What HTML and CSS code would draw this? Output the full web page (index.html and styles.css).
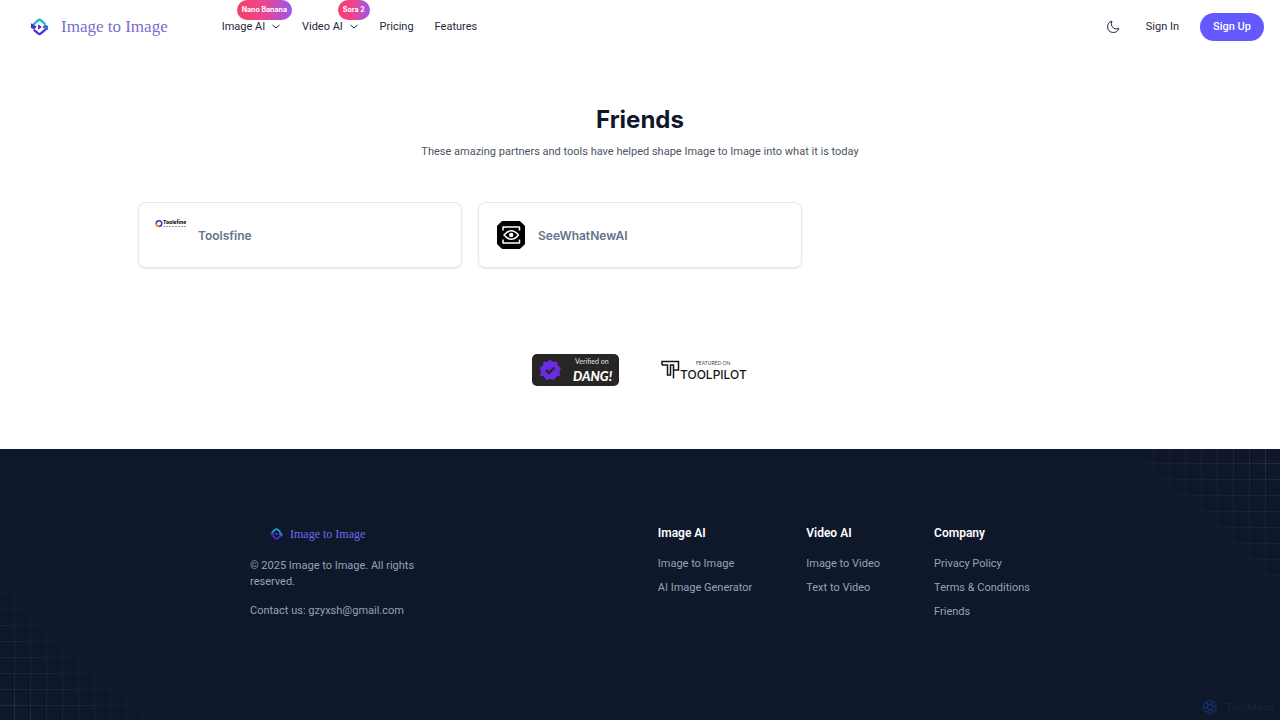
FILE: index.html
```html
<!DOCTYPE html>
<html lang="en">
<head>
<meta charset="utf-8">
<meta name="viewport" content="width=device-width, initial-scale=1">
<title>Friends - Image to Image</title>
<link rel="stylesheet" href="styles.css">
</head>
<body class="page">
<svg class="defs" aria-hidden="true">
  <defs>
    <linearGradient id="brand" x1="1" y1="0" x2="0" y2="1">
      <stop offset="0.1" stop-color="#12c8dc"/>
      <stop offset="0.5" stop-color="#3478d8"/>
      <stop offset="0.75" stop-color="#5a22cc"/>
    </linearGradient>
    <symbol id="logo" viewBox="0 0 20 18">
      <path d="M3 7 8.500 2Q10 .800 11.500 2L16 6" fill="none" stroke="#20b4dc" stroke-width="2.400"/>
      <path d="M17 11 11.500 15.800Q10 17 8.500 15.800L4 12" fill="none" stroke="#5a2bd2" stroke-width="2.400"/>
      <path d="M1 5 7 8.500 4.500 11.500 1 10Z" fill="#4a35c8"/>
      <path d="M19 12.500 13 9.500 15.500 6 19 8Z" fill="#3273d8"/>
      <path d="M8.500 6 12.500 9 8.500 12Z" fill="#4437c9"/>
    </symbol>
  </defs>
</svg>
<header class="topbar">
  <a class="brand" href="#"><svg class="brand-icon"><use href="#logo"/></svg><span>Image to Image</span></a>
  <nav class="menu">
    <button class="menu-item" type="button">Image AI
      <svg class="chevron" viewBox="0 0 8 5"><path d="M.500 1 4 4 7.500 1"/></svg>
      <span class="badge">Nano Banana</span></button>
    <button class="menu-item" type="button">Video AI
      <svg class="chevron" viewBox="0 0 8 5"><path d="M.500 1 4 4 7.500 1"/></svg>
      <span class="badge">Sora 2</span></button>
    <a class="menu-item" href="#">Pricing</a>
    <a class="menu-item" href="#">Features</a>
  </nav>
  <div class="account">
    <button class="theme" type="button" aria-label="Dark mode">
      <svg viewBox="0 0 14 14"><path d="M6 1.200A5.700 5.700 0 1 0 12.800 8.200 4.500 4.500 0 0 1 6.200 6.500 4.500 4.500 0 0 1 6 1.200Z"/></svg>
    </button>
    <a class="signin" href="#">Sign In</a>
    <a class="signup" href="#">Sign Up</a>
  </div>
</header>
<main class="main">
  <h1 class="title">Friends</h1>
  <p class="subtitle">These amazing partners and tools have helped shape Image to Image into what it is today</p>
  <div class="cards">
    <a class="card" href="#">
      <svg class="card-icon" viewBox="0 0 32 32">
        <circle cx="4" cy="4.500" r="2.800" fill="none" stroke="#3c32b4" stroke-width="1.500"/>
        <path d="M1.200 4.500A2.800 2.800 0 0 0 4 7.300" fill="none" stroke="#f39a38" stroke-width="1.800"/>
        <text class="tf-name" x="8" y="5">Toolsfine</text>
        <path d="M8 7.500H31" stroke="#999" stroke-width="1" stroke-dasharray="2 1"/>
      </svg>
      <span>Toolsfine</span>
    </a>
    <a class="card" href="#">
      <svg class="card-icon" viewBox="0 0 32 32">
        <path d="M7 2.500H25L29.500 7V25L25 29.500H7L2.500 25V7Z" stroke="#000" stroke-width="1" stroke-linejoin="round"/>
        <g fill="none" stroke="#fff" stroke-width="1.500" stroke-linejoin="round">
          <path d="M8 11.500V8H24.500V11.500M8 20.500V24H24.500V20.500M9 16Q16.200 7.500 23.500 16 16.200 24.500 9 16Z"/>
        </g>
        <circle cx="16.200" cy="16" r="2.200" fill="#fff"/>
      </svg>
      <span>SeeWhatNewAI</span>
    </a>
  </div>
  <div class="awards">
    <a href="#" aria-label="Verified on DANG!">
      <svg class="award" viewBox="0 0 87 32">
        <rect width="87" height="32" rx="5" fill="#282624"/>
        <path fill="#6b2be0" d="M18 5.500 21 8 25 7.500 25.800 11.500 29 14 27.500 17.500 28 21.500 24.500 22.500 22 26 18 25 14 26 11.800 22.500 8 21.500 9 17.500 7.500 14 11 11.500 11.500 7.500 15.500 8Z"/>
        <path d="M14 16 17 19 22.500 13.500" fill="none" stroke="#282624" stroke-width="2.400"/>
        <text class="dang-small" x="43" y="10">Verified on</text>
        <text class="dang-big" x="41" y="27">DANG!</text>
      </svg>
    </a>
    <a href="#" aria-label="Featured on Tool Pilot">
      <svg class="award" viewBox="0 0 87 32">
        <path d="M1 11V7.500H17.500V16H12.500M1 11H6.500V21H9.500V11H12.500V24.500" fill="none" stroke="#151515" stroke-width="1.500"/>
        <text class="pilot-small" x="35" y="11">FEATURED ON</text>
        <text class="pilot-big" x="19" y="25">TOOLPILOT</text>
      </svg>
    </a>
  </div>
</main>
<footer class="footer">
  <div class="footer-inner">
    <div class="about">
      <a class="footer-brand" href="#"><svg class="footer-icon"><use href="#logo"/></svg><span>Image to Image</span></a>
      <p>© 2025 Image to Image. All rights reserved.</p>
      <p>Contact us: gzyxsh@gmail.com</p>
    </div>
    <nav class="links">
      <div class="col"><h2>Image AI</h2><a href="#">Image to Image</a><a href="#">AI Image Generator</a></div>
      <div class="col"><h2>Video AI</h2><a href="#">Image to Video</a><a href="#">Text to Video</a></div>
      <div class="col"><h2>Company</h2><a href="#">Privacy Policy</a><a href="#">Terms &amp; Conditions</a><a href="#">Friends</a></div>
    </nav>
  </div>
  <div class="watermark">
    <svg viewBox="0 0 16 16"><g fill="none" stroke="#123474" stroke-width="1"><path d="M8 1 14 4.500V11.500L8 15 2 11.500V4.500Z"/><path d="M8 5 10.600 6.500V9.500L8 11 5.400 9.500V6.500ZM5.400 9.500V3M8 11 2.500 8M10.600 9.500 5 13M10.600 6.500V13M8 5 13.500 8M5.400 6.500 11 3"/></g></svg>
    <span>ToolMage</span>
  </div>
</footer>
</body>
</html>
```

FILE: styles.css
```css
* { box-sizing: border-box; }
.page {
  margin: 0;
  min-height: 100vh;
  display: flex;
  flex-direction: column;
  background: #fff;
  color: #1e293b;
  font-family: Roboto, Inter, "Liberation Sans", sans-serif;
  font-size: 11px;
}
.page a { color: inherit; text-decoration: none; }
.page button { border: 0; padding: 0; background: none; color: inherit; font: inherit; }
.defs { position: absolute; width: 0; height: 0; }

.topbar { display: flex; align-items: center; padding: 12px 16px 12px 30px; }
.topbar .brand {
  display: flex;
  align-items: center;
  gap: 12px;
  color: #7a6dd0;
  font: 17px/28px "Liberation Serif", serif;
}
.topbar .brand span { padding-top: 1px; }
.brand-icon { width: 19px; height: 18px; }
.menu { display: flex; gap: 21px; margin-left: 54px; }
.menu .menu-item { position: relative; padding-top: 1px; white-space: nowrap; font-size: 11px; line-height: 28px; font-weight: 400; }
.chevron { width: 8px; height: 5px; margin: 0 1px 1px 4px; fill: none; stroke: currentColor; stroke-width: 1; }
.badge {
  position: absolute;
  right: -11px;
  top: -12px;
  padding: 0 5px;
  border-radius: 10px;
  background: linear-gradient(90deg, #f63f66, #eb4690 50%, #9657ec);
  color: #fff;
  font-family: Inter, sans-serif;
  font-size: 7px;
  font-weight: 700;
  line-height: 20px;
}
.account { display: flex; align-items: center; margin-left: auto; font-weight: 500; }
.theme { display: flex; margin-right: 26px; }
.theme svg { width: 14px; height: 14px; fill: none; stroke: currentColor; stroke-width: 1; stroke-linejoin: round; }
.signin { margin-right: 21px; font-weight: 400; }
.account .signup { padding: 0 13px; border-radius: 14px; background: #6359ff; color: #fff; line-height: 28px; }

.main { padding: 51px 24px 63px; }
.title { margin: 0; color: #0f172a; font-family: Inter, sans-serif; font-size: 24px; font-weight: 700; line-height: 32px; text-align: center; }
.subtitle { margin: 8px 0 42px; color: #4b5563; line-height: 16px; text-align: center; }
.cards { display: grid; grid-template-columns: repeat(3, 1fr); gap: 16px; max-width: 1004px; margin: 0 auto; }
.cards .card {
  display: flex;
  align-items: center;
  gap: 11px;
  padding: 16px;
  border: 1px solid #e7e8eb;
  border-radius: 8px;
  box-shadow: 0 1px 2px #0000001a;
  color: #64748b;
  font-family: Inter, sans-serif;
  font-size: 12px;
  font-weight: 600;
}
.card-icon { width: 32px; height: 32px; }
.tf-name { font: 800 5px Inter, sans-serif; fill: #111; }
.awards { display: flex; justify-content: center; gap: 42px; margin-top: 86px; }
.award { display: block; width: 87px; height: 32px; }
.dang-small { font: 500 7px Lato, sans-serif; fill: #ddd; }
.dang-big { font: italic 900 13px Lato, sans-serif; fill: #fff; }
.pilot-small { font: 5px Lato, sans-serif; fill: #444; }
.pilot-big { font: 500 12px Inter, sans-serif; fill: #151515; }

.footer { position: relative; flex: 1; padding: 75px 24px; background: #0f172a; color: #94a3b8; }
.footer::before, .footer::after {
  content: "";
  position: absolute;
  width: 180px;
  height: 170px;
  background-image:
    linear-gradient(90deg, #ffffff16 1px, transparent 1px),
    linear-gradient(#ffffff16 1px, transparent 1px);
  background-size: 16px 16px;
}
.footer::before { right: 0; top: 0; background-position: 5px 14px; mask-image: linear-gradient(to bottom left, #000, transparent 56%); }
.footer::after { left: 0; bottom: 0; background-position: 14px 11px; mask-image: linear-gradient(to top right, #000, transparent 56%); }
.footer-inner { display: flex; justify-content: space-between; max-width: 780px; margin: 0 auto; }
.about { width: 184px; }
.about p { margin: 0 0 13px; line-height: 16px; }
.footer .footer-brand {
  display: flex;
  align-items: center;
  gap: 7px;
  margin: 0 0 14px 20px;
  color: #7468ee;
  font: 12px/20px "Liberation Serif", serif;
}
.footer-icon { width: 13px; height: 12px; }
.links { display: flex; gap: 54px; }
.col { display: flex; flex-direction: column; gap: 8px; line-height: 16px; }
.col h2 { margin: 0 0 6px; color: #fff; font-size: 12px; font-weight: 600; line-height: 18px; }
.watermark {
  position: absolute;
  right: 5px;
  bottom: 5px;
  display: flex;
  align-items: center;
  gap: 8px;
  color: #17203a;
  font-size: 11px;
  font-weight: 600;
}
.watermark svg { width: 16px; height: 16px; }
```
